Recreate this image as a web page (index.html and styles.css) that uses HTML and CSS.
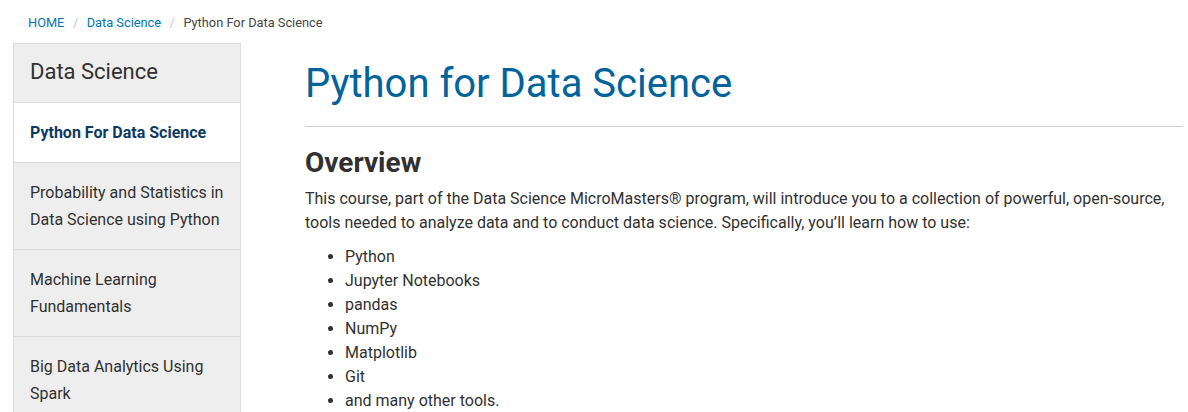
FILE: index.html
```html
<!DOCTYPE html>
<html lang="en">
<head>
<meta charset="utf-8">
<title>Python for Data Science</title>
<link rel="stylesheet" href="styles.css">
</head>
<body>
<nav class="breadcrumb">
  <a class="crumb-link" href="#">HOME</a>
  <span class="crumb-sep">/</span>
  <a class="crumb-link" href="#">Data Science</a>
  <span class="crumb-sep">/</span>
  <span class="crumb-current">Python For Data Science</span>
</nav>
<div class="layout">
  <aside class="sidebar">
    <div class="sidebar-head">Data Science</div>
    <a class="side-item active" href="#">Python For Data Science</a>
    <a class="side-item" href="#">Probability and Statistics in Data Science using Python</a>
    <a class="side-item" href="#">Machine Learning Fundamentals</a>
    <a class="side-item" href="#">Big Data Analytics Using Spark</a>
  </aside>
  <main class="main">
    <h1 class="title">Python for Data Science</h1>
    <hr class="rule">
    <h2 class="section">Overview</h2>
    <p class="lead">This course, part of the Data Science MicroMasters® program, will introduce you to a collection of powerful, open-source, tools needed to analyze data and to conduct data science. Specifically, you’ll learn how to use:</p>
    <ul class="tools">
      <li>Python</li>
      <li>Jupyter Notebooks</li>
      <li>pandas</li>
      <li>NumPy</li>
      <li>Matplotlib</li>
      <li>Git</li>
      <li>and many other tools.</li>
    </ul>
  </main>
</div>
</body>
</html>
```
FILE: styles.css
```css
* { box-sizing: border-box; }
html, body { margin: 0; padding: 0; background: #fff; }
body {
  font-family: Roboto, "Liberation Sans", Arial, sans-serif;
  color: #313131;
  overflow: hidden;
}
.breadcrumb {
  padding: 13px 0 0 28px;
  height: 43px;
  font-size: 12.8px;
  line-height: 20px;
  display: flex;
  align-items: flex-start;
}
.crumb-link { color: #0075b4; text-decoration: none; }
.crumb-sep { color: #c8c8c8; padding: 0 8.5px; }
.crumb-current { color: #454545; }
.layout {
  display: flex;
  gap: 64px;
  padding: 0 5px 0 13px;
  align-items: flex-start;
}
.sidebar {
  width: 228px;
  flex: 0 0 228px;
  border: 1px solid #dcdcdc;
  border-bottom: none;
  background: #eeeeee;
  display: flex;
  flex-direction: column;
}
.sidebar-head {
  font-size: 22px;
  line-height: 28px;
  padding: 14px 16px 16px;
  color: #313131;
  border-bottom: 1px solid #dcdcdc;
}
.side-item {
  display: block;
  padding: 16px;
  font-size: 16px;
  line-height: 27px;
  color: #313131;
  text-decoration: none;
  border-bottom: 1px solid #dcdcdc;
}
.side-item.active {
  background: #fff;
  font-weight: 700;
  color: #0d3a61;
}
.main { flex: 1; min-width: 0; }
.title {
  margin: 17px 0 18px;
  font-size: 40px;
  line-height: 48px;
  font-weight: 400;
  color: #00639c;
}
.rule {
  margin: 0;
  border: 0;
  border-top: 1px solid #cfcfcf;
}
.section {
  margin: 19px 0 7px;
  font-size: 28px;
  line-height: 34px;
  font-weight: 700;
  color: #313131;
}
.lead {
  margin: 0 0 10px;
  font-size: 16px;
  line-height: 24px;
}
.tools {
  margin: 0;
  padding-left: 40px;
  font-size: 16px;
  line-height: 24px;
}
```
